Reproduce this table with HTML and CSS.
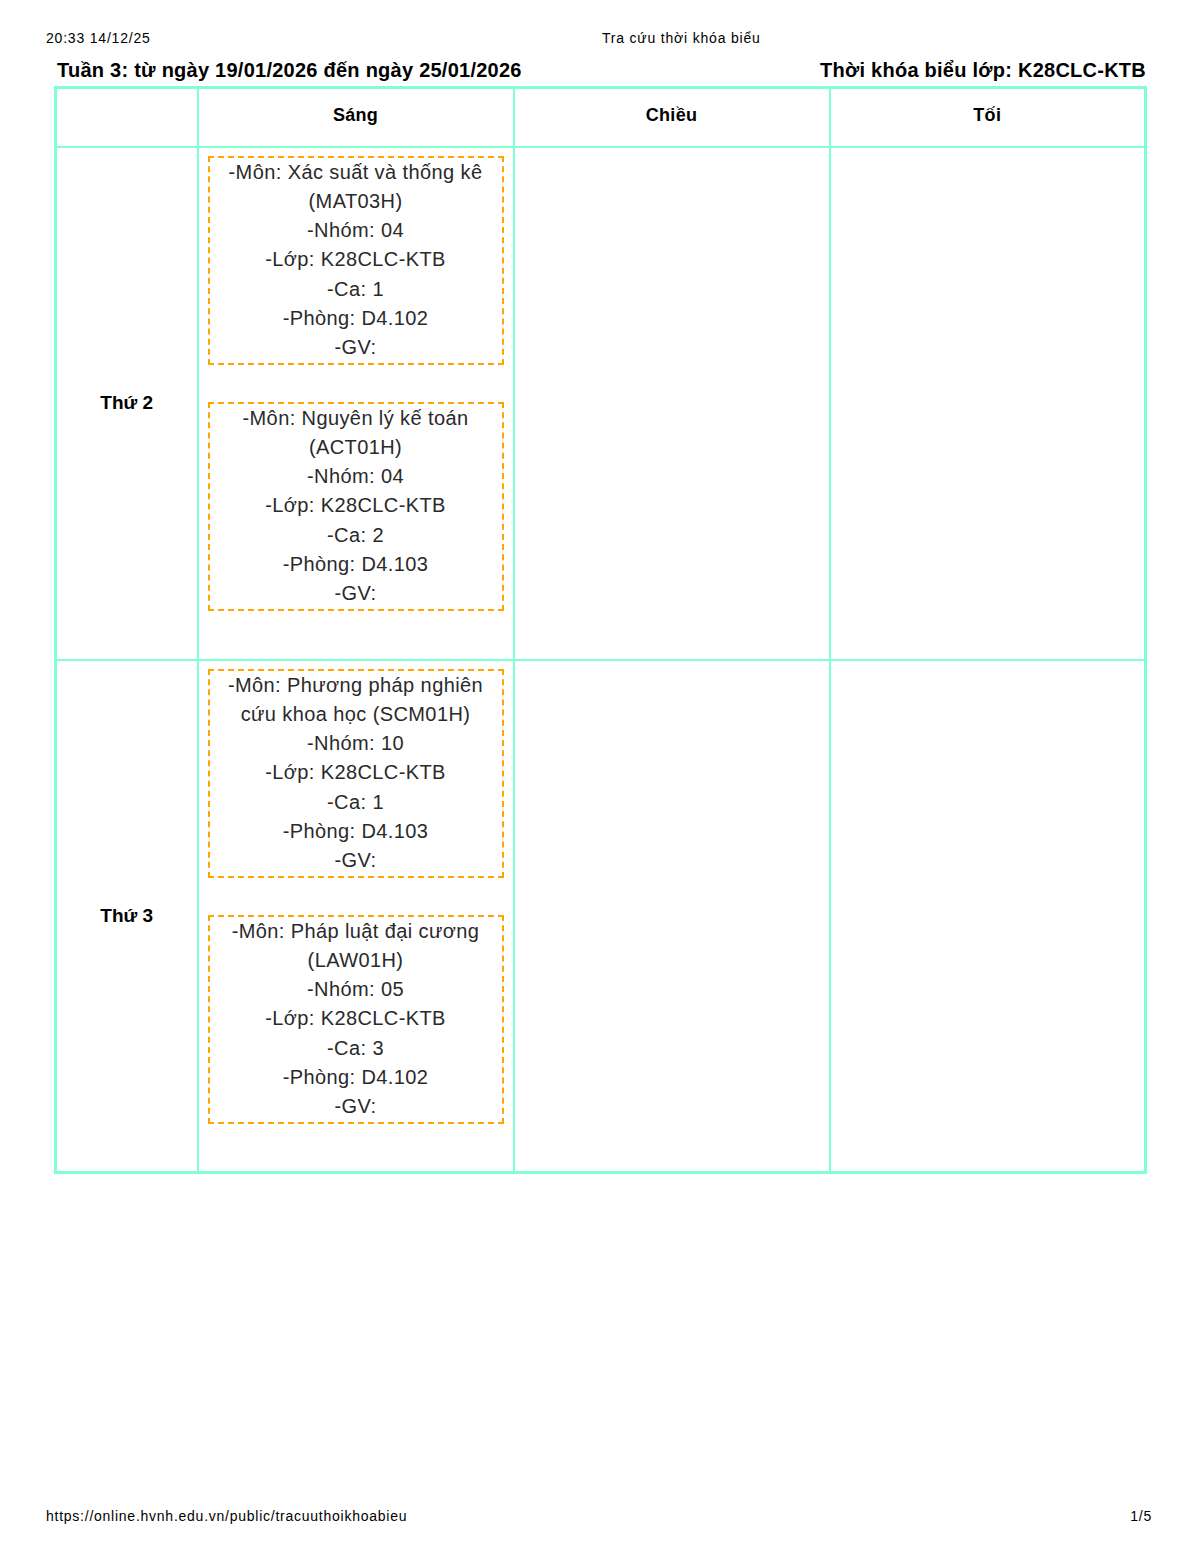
FILE: index.html
```html
<!DOCTYPE html>
<html lang="vi">
<head>
<meta charset="utf-8">
<title>Tra cứu thời khóa biểu</title>
<link rel="stylesheet" href="styles.css">
</head>
<body>
<div class="page">
  <header class="print-head">
    <span class="print-date">20:33 14/12/25</span>
    <span class="print-title">Tra cứu thời khóa biểu</span>
  </header>

  <main class="content">
    <div class="title-row">
      <h1 class="week-title">Tuần 3: từ ngày 19/01/2026 đến ngày 25/01/2026</h1>
      <h2 class="class-title">Thời khóa biểu lớp: K28CLC-KTB</h2>
    </div>

    <table class="tkb">
      <colgroup>
        <col class="c-day">
        <col class="c-slot">
        <col class="c-slot">
        <col class="c-slot">
      </colgroup>
      <thead>
        <tr class="head-row">
          <th></th>
          <th>Sáng</th>
          <th>Chiều</th>
          <th>Tối</th>
        </tr>
      </thead>
      <tbody>
        <tr class="day-row">
          <th class="day">Thứ 2</th>
          <td class="slot">
            <div class="lesson">
              <p>-Môn: Xác suất và thống kê (MAT03H)</p>
              <p>-Nhóm: 04</p>
              <p>-Lớp: K28CLC-KTB</p>
              <p>-Ca: 1</p>
              <p>-Phòng: D4.102</p>
              <p>-GV:</p>
            </div>
            <div class="lesson">
              <p>-Môn: Nguyên lý kế toán (ACT01H)</p>
              <p>-Nhóm: 04</p>
              <p>-Lớp: K28CLC-KTB</p>
              <p>-Ca: 2</p>
              <p>-Phòng: D4.103</p>
              <p>-GV:</p>
            </div>
          </td>
          <td class="slot"></td>
          <td class="slot"></td>
        </tr>
        <tr class="day-row">
          <th class="day">Thứ 3</th>
          <td class="slot">
            <div class="lesson">
              <p>-Môn: Phương pháp nghiên cứu khoa học (SCM01H)</p>
              <p>-Nhóm: 10</p>
              <p>-Lớp: K28CLC-KTB</p>
              <p>-Ca: 1</p>
              <p>-Phòng: D4.103</p>
              <p>-GV:</p>
            </div>
            <div class="lesson">
              <p>-Môn: Pháp luật đại cương (LAW01H)</p>
              <p>-Nhóm: 05</p>
              <p>-Lớp: K28CLC-KTB</p>
              <p>-Ca: 3</p>
              <p>-Phòng: D4.102</p>
              <p>-GV:</p>
            </div>
          </td>
          <td class="slot"></td>
          <td class="slot"></td>
        </tr>
      </tbody>
    </table>
  </main>

  <footer class="print-foot">
    <span class="print-url">https://online.hvnh.edu.vn/public/tracuuthoikhoabieu</span>
    <span class="print-page">1/5</span>
  </footer>
</div>
</body>
</html>
```

FILE: styles.css
```css
* { box-sizing: border-box; }

html, body {
  margin: 0;
  padding: 0;
  background: #fff;
}

body {
  font-family: "Liberation Sans", Arial, sans-serif;
  color: #000;
}

.page {
  width: 1200px;
  height: 1553px;
  display: flex;
  flex-direction: column;
}

.print-head {
  display: flex;
  align-items: center;
  padding: 30px 46px 0;
  height: 46px;
  font-size: 14px;
  line-height: 16px;
  letter-spacing: 0.8px;
}

.print-date { width: 556px; }

.content {
  flex: 1;
  padding: 0 55px 0 54px;
}

.title-row {
  display: flex;
  justify-content: space-between;
  align-items: center;
  height: 40px;
  padding: 8px 0 0 3px;
}

.week-title,
.class-title {
  margin: 0;
  font-size: 20px;
  font-weight: bold;
  line-height: 24px;
  letter-spacing: 0.25px;
}

.class-title { margin-right: -1px; }

.tkb {
  width: 1091px;
  border-collapse: collapse;
  border: 3px solid #7fffd4;
  table-layout: fixed;
}

.c-day { width: 142px; }
.c-slot { width: 316px; }

.tkb th,
.tkb td {
  border: 2px solid #7fffd4;
  padding: 0;
}

.head-row th {
  height: 59px;
  font-size: 18px;
  font-weight: bold;
  text-align: center;
  vertical-align: middle;
  padding-bottom: 4px;
  letter-spacing: 0.3px;
}

.day {
  font-size: 19px;
  font-weight: bold;
  text-align: center;
  vertical-align: middle;
}

.day-row { height: 513px; }

.slot {
  vertical-align: top;
  padding: 8px 9px 10px 9px !important;
}

.lesson {
  border: 2px dashed #ffa500;
  margin-bottom: 37px;
  text-align: center;
  font-size: 20px;
  line-height: 29.3px;
  color: #2a2a2a;
  padding: 0 6px;
  letter-spacing: 0.4px;
}

.lesson p { margin: 0; }

.print-foot {
  display: flex;
  justify-content: space-between;
  align-items: center;
  padding: 0 48px 12px 46px;
  height: 62px;
  font-size: 14px;
  line-height: 16px;
  letter-spacing: 0.75px;
}
```
